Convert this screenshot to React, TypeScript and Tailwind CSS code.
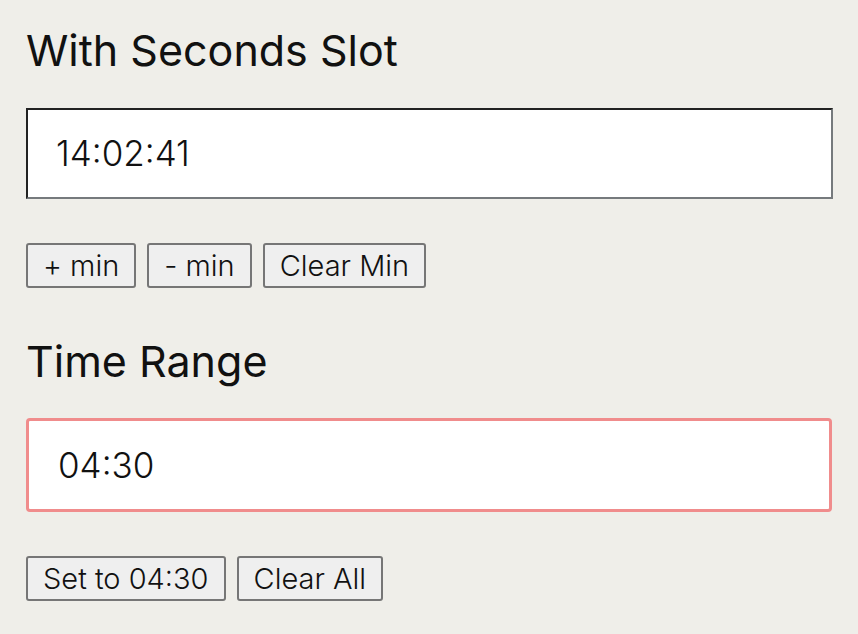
import React from "react";

const btn =
  "h-[45px] rounded-[3px] border-2 border-[#767676] bg-[#efefef] px-[15px] text-[29px] font-light leading-none text-[#111]";

export default function App() {
  return (
    <div className="min-h-[634px] w-full bg-[#efeee9] px-[26px] pt-[22px] text-[#111] [font-family:Inter,'Noto_Sans',sans-serif]">
      <h2 className="text-[43px] leading-[56px] font-normal">With Seconds Slot</h2>
      <div className="mt-[30px] flex h-[91px] w-[807px] items-center border-2 border-t-[#222] border-l-[#222] border-b-[#767a7d] border-r-[#767a7d] bg-white pl-[28px]">
        <span className="text-[35px] font-light">14:02:41</span>
      </div>
      <div className="mt-[44px] flex gap-[11px]">
        <button className={btn}>+ min</button>
        <button className={btn}>- min</button>
        <button className={btn}>Clear Min</button>
      </div>
      <h2 className="mt-[45px] text-[43px] leading-[56px] font-normal">Time Range</h2>
      <div className="mt-[29px] flex h-[94px] w-[806px] items-center rounded-[4px] border-[3px] border-[#f08c8c] bg-white pl-[29px]">
        <span className="text-[35px] font-light">04:30</span>
      </div>
      <div className="mt-[44px] flex gap-[11px]">
        <button className={btn}>Set to 04:30</button>
        <button className={btn}>Clear All</button>
      </div>
    </div>
  );
}
